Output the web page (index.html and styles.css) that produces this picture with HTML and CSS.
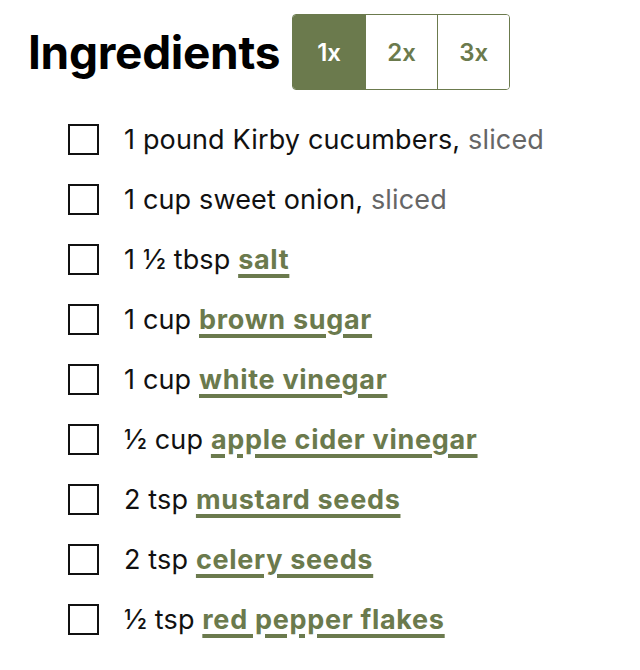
FILE: index.html
```html
<!DOCTYPE html>
<html>
<head>
  <meta charset="UTF-8">
  <title>Ingredients</title>
  <link rel="stylesheet" href="styles.css">
</head>
<body>
  <div class="recipe">
    <div class="header">
      <h2>Ingredients</h2>
      <div class="scale-group">
        <button class="active">1x</button>
        <button>2x</button>
        <button>3x</button>
      </div>
    </div>

    <ul class="ingredients">
      <li><span class="check"></span><span>1 pound Kirby cucumbers, <span class="note">sliced</span></span></li>
      <li><span class="check"></span><span>1 cup sweet onion, <span class="note">sliced</span></span></li>
      <li><span class="check"></span><span>1 ½ tbsp <a href="#">salt</a></span></li>
      <li><span class="check"></span><span>1 cup <a href="#">brown sugar</a></span></li>
      <li><span class="check"></span><span>1 cup <a href="#">white vinegar</a></span></li>
      <li><span class="check"></span><span>½ cup <a href="#">apple cider vinegar</a></span></li>
      <li><span class="check"></span><span>2 tsp <a href="#">mustard seeds</a></span></li>
      <li><span class="check"></span><span>2 tsp <a href="#">celery seeds</a></span></li>
      <li><span class="check"></span><span>½ tsp <a href="#">red pepper flakes</a></span></li>
    </ul>
  </div>
</body>
</html>
```

FILE: styles.css
```css
body {
  font-family: Inter, "Liberation Sans", Arial, sans-serif;
  margin: 0;
  padding: 14px 28px;
  color: #111;
  background: white;
}
.header {
  display: flex;
  align-items: center;
  gap: 12px;
}
h2 {
  margin: 0;
  font-size: 46px;
  font-weight: 700;
  letter-spacing: -0.3px;
  color: #000;
}
.scale-group {
  display: flex;
  border: 1.5px solid #6b7a4d;
  border-radius: 4px;
  overflow: hidden;
}
.scale-group button {
  width: 72px;
  height: 74px;
  background: white;
  color: #6b7a4d;
  border: none;
  border-left: 1.5px solid #6b7a4d;
  font-family: inherit;
  font-size: 24px;
  font-weight: 600;
  padding: 0;
}
.scale-group button:first-child {
  border-left: none;
}
.scale-group button.active {
  background: #6b7a4d;
  color: white;
}
.ingredients {
  list-style: none;
  margin: 19px 0 0 0;
  padding: 0 0 0 40px;
}
.ingredients li {
  display: flex;
  align-items: center;
  gap: 25px;
  height: 60px;
  font-size: 27px;
  letter-spacing: 0.15px;
}
.check {
  flex: 0 0 auto;
  width: 27px;
  height: 27px;
  border: 2px solid #111;
}
.note {
  color: #666;
}
.ingredients a {
  color: #6b7a4d;
  font-weight: 700;
  letter-spacing: 0.7px;
  text-decoration: underline;
  text-decoration-thickness: 4px;
  text-underline-offset: 5px;
}
```
